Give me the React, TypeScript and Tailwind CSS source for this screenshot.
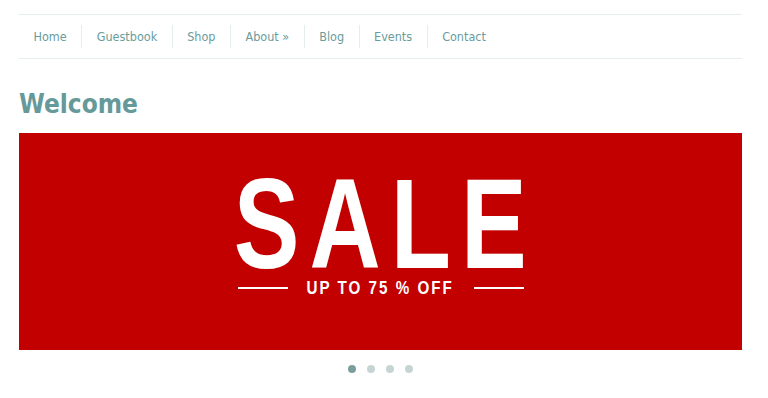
import React from "react";

const links = ["Home", "Guestbook", "Shop", "About »", "Blog", "Events", "Contact"];

export default function App() {
  const nav = { fontFamily: '"DejaVu Sans Condensed", "DejaVu Sans", sans-serif', fontStretch: "condensed" } as React.CSSProperties;
  const banner = { fontFamily: '"Liberation Sans", Arial, sans-serif' };
  return (
    <div className="bg-white min-h-[398px] w-[768px] pt-[14px]">
      <div className="ml-[19px] w-[723px]">
        {/* top menu */}
        <ul className="flex border-y border-[#e5eded] py-[10px] text-[12.5px] text-[#6a9c9c]" style={nav}>
          {links.map((l, i) => (
            <li
              key={l}
              className={"h-[23px] leading-[23px] px-[14.5px] " + (i > 0 ? "border-l border-[#e5eded]" : "")}
            >
              {l}
            </li>
          ))}
        </ul>

        <h1 className="mt-[29px] text-[26px] leading-[32px] font-bold text-[#669999]" style={nav}>
          Welcome
        </h1>

        {/* slider */}
        <div className="mt-[13px] h-[217px] bg-[#c20000] pt-[41px] flex flex-col items-center text-white" style={banner}>
          <div className="h-[100px] flex justify-center">
            <span
              className="inline-block font-bold text-[128px] leading-[100px] tracking-[13px] pl-[13px] scale-x-[0.77]"
            >
              SALE
            </span>
          </div>
          <div className="mt-[4px] flex items-center gap-[19px]">
            <div className="w-[50px] h-[2px] bg-white" />
            <div className="w-[148px] h-[19px] flex justify-center">
              <span className="inline-block whitespace-nowrap font-bold text-[19px] leading-[19px] tracking-[2.5px] scale-x-[0.8]">
                UP TO 75 % OFF
              </span>
            </div>
            <div className="w-[50px] h-[2px] bg-white" />
          </div>
        </div>

        <div className="mt-[15px] flex justify-center gap-[10.7px]">
          <span className="w-[8px] h-[8px] rounded-full bg-[#7a9e9a]" />
          <span className="w-[8px] h-[8px] rounded-full bg-[#c6d5d3]" />
          <span className="w-[8px] h-[8px] rounded-full bg-[#c6d5d3]" />
          <span className="w-[8px] h-[8px] rounded-full bg-[#c6d5d3]" />
        </div>
      </div>
    </div>
  );
}
